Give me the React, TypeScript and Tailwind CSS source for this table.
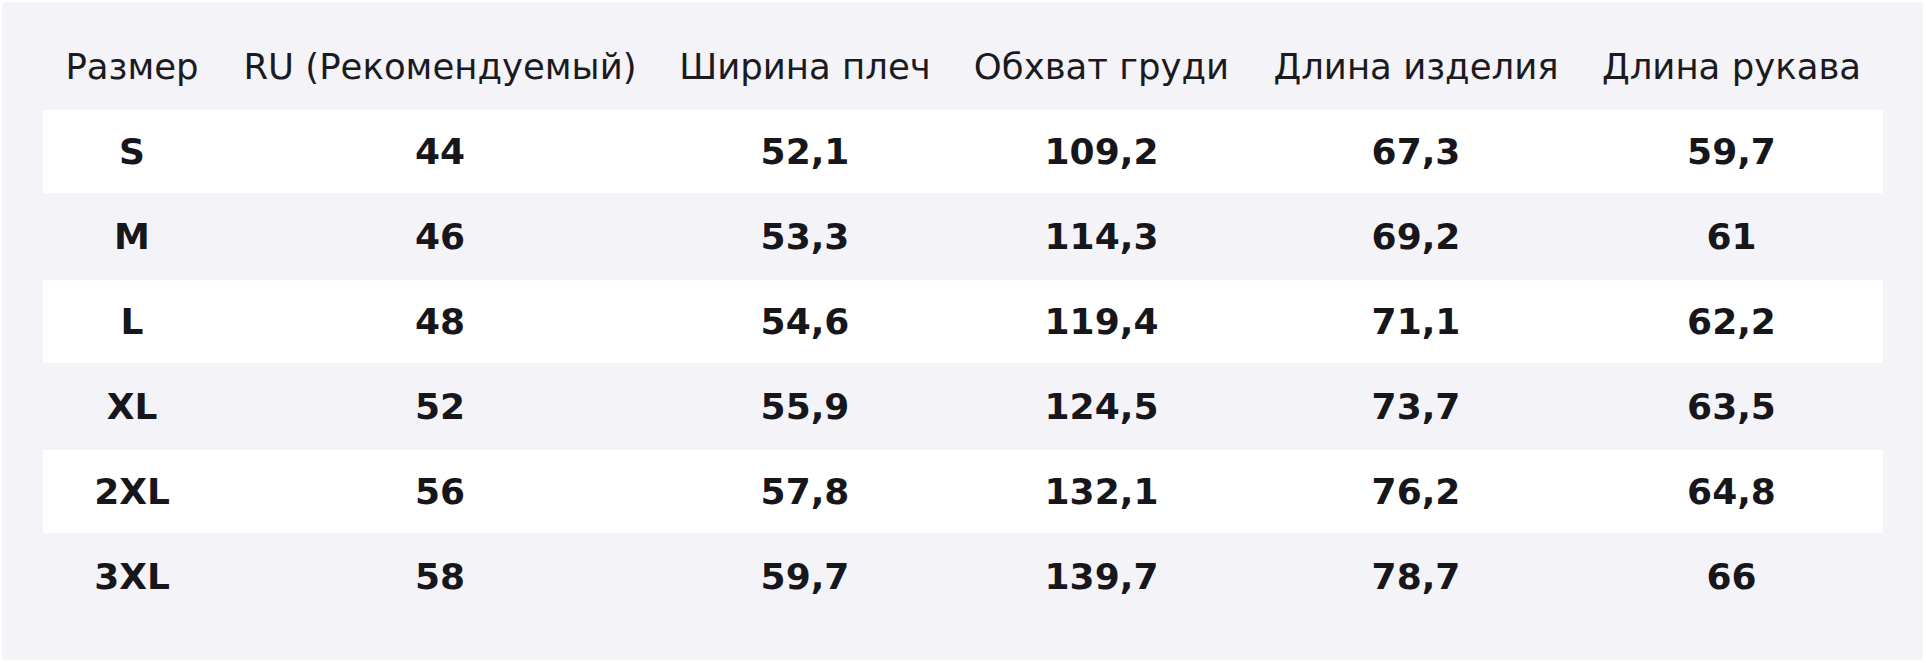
import React from "react";

const headers = [
  "Размер",
  "RU (Рекомендуемый)",
  "Ширина плеч",
  "Обхват груди",
  "Длина изделия",
  "Длина рукава",
];

const rows: string[][] = [
  ["S", "44", "52,1", "109,2", "67,3", "59,7"],
  ["M", "46", "53,3", "114,3", "69,2", "61"],
  ["L", "48", "54,6", "119,4", "71,1", "62,2"],
  ["XL", "52", "55,9", "124,5", "73,7", "63,5"],
  ["2XL", "56", "57,8", "132,1", "76,2", "64,8"],
  ["3XL", "58", "59,7", "139,7", "78,7", "66"],
];

export default function App() {
  return (
    <div
      className="w-[1926px] h-[663px] bg-white pt-[2px] pl-[2px] pr-[3px] pb-[3px]"
      style={{ fontFamily: '"DejaVu Sans", "Noto Sans", sans-serif' }}
    >
      <div className="h-full rounded-[4px] bg-[#f4f3f8] pl-[41px] pr-[40px] pt-[21px]">
        <table className="table-fixed border-separate border-spacing-x-0 border-spacing-y-[2px] w-[1840px]">
          <colgroup>
            <col className="w-[178px]" />
            <col className="w-[438px]" />
            <col className="w-[292px]" />
            <col className="w-[301px]" />
            <col className="w-[328px]" />
            <col className="w-[303px]" />
          </colgroup>
          <thead>
            <tr className="h-[83px]">
              {headers.map((h) => (
                <th
                  key={h}
                  className="p-0 text-center align-middle text-[35.5px] font-normal leading-none whitespace-nowrap text-[#1b1b1f]"
                >
                  {h}
                </th>
              ))}
            </tr>
          </thead>
          <tbody>
            {rows.map((r, i) => (
              <tr
                key={r[0]}
                className={`h-[83px] ${i % 2 === 0 ? "bg-white" : "bg-transparent"}`}
              >
                {r.map((c, j) => (
                  <td
                    key={j}
                    className="p-0 text-center align-middle text-[36px] font-bold leading-none whitespace-nowrap text-[#16161b]"
                  >
                    {c}
                  </td>
                ))}
              </tr>
            ))}
          </tbody>
        </table>
      </div>
    </div>
  );
}
